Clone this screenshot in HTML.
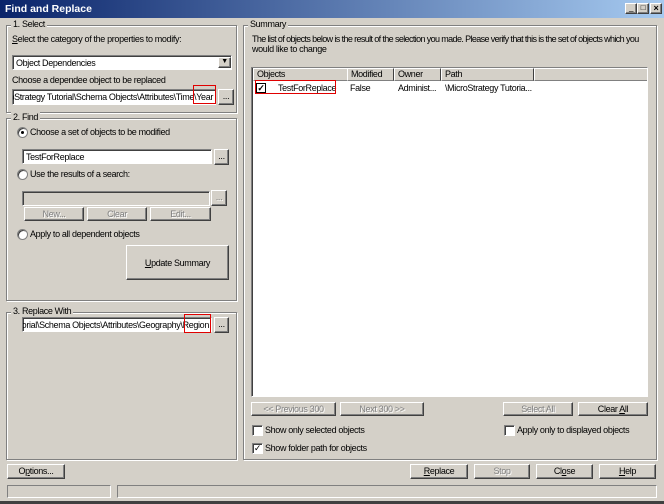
<!DOCTYPE html>
<html><head><meta charset="utf-8"><style>
*{box-sizing:border-box;margin:0;padding:0}
body{width:664px;height:504px;background:#d4d0c8;font-family:"Liberation Sans",sans-serif;font-size:9px;letter-spacing:-0.35px;color:#000;position:relative;overflow:hidden}
.a{position:absolute;white-space:nowrap}
.title{left:0;top:0;width:664px;height:18px;background:linear-gradient(90deg,#0a246a,#a6caf0);color:#fff;font-weight:bold;font-size:10.5px;padding:3px 0 0 5px;letter-spacing:0}
.grp{position:absolute;border:1px solid #808080;box-shadow:1px 1px 0 #fff inset,1px 1px 0 #fff}
.lbl{position:absolute;background:#d4d0c8;padding:0 2px;top:-7px;left:4px}
.inp{position:absolute;background:#fff;border:1px solid;border-color:#808080 #fff #fff #808080;box-shadow:inset 1px 1px 0 #404040;padding:2px 0 0 3px;overflow:hidden;white-space:nowrap}
.r{display:flex;justify-content:flex-end;padding-right:2px}
.dis{background:#d4d0c8}
.btn{position:absolute;background:#d4d0c8;border:1px solid;border-color:#fff #404040 #404040 #fff;box-shadow:inset -1px -1px 0 #808080;text-align:center;padding-top:1px;white-space:nowrap}
.gray{color:#808080;text-shadow:1px 1px 0 #fff}
.radio{position:absolute;width:11px;height:11px;border-radius:50%;background:#fff;border:1px solid #808080;box-shadow:inset 1px 1px 0 #404040}
.chk{position:absolute;width:11px;height:11px;background:#fff;border:1px solid;border-color:#808080 #fff #fff #808080;box-shadow:inset 1px 1px 0 #404040;font-size:9px;line-height:9px;text-align:center}
.red{position:absolute;border:1px solid #e00000}
.hd{position:absolute;top:0;height:13px;border:1px solid;border-color:#fff #404040 #808080 #fff;padding-left:3px;background:#d4d0c8}
</style></head><body>
<div class="a title">Find and Replace</div>
<div class="btn" style="left:625px;top:3px;width:12px;height:11px;font-size:8px;line-height:7px;padding:0">_</div>
<div class="btn" style="left:637px;top:3px;width:12px;height:11px;font-size:8px;line-height:8px;padding:0">□</div>
<div class="btn" style="left:650px;top:3px;width:12px;height:11px;font-size:9px;line-height:8px;padding:0;font-weight:bold">×</div>

<div class="grp" style="left:6px;top:25px;width:231px;height:88px"><span class="lbl">1. Select</span></div>
<div class="a" style="left:12px;top:34px"><u>S</u>elect the category of the properties to modify:</div>
<div class="inp" style="left:12px;top:55px;width:220px;height:15px">Object Dependencies</div>
<div class="btn" style="left:218px;top:57px;width:13px;height:11px;font-size:7px;line-height:8px;padding:0">▼</div>
<div class="a" style="left:12px;top:75px">Choose a dependee object to be replaced</div>
<div class="inp r" style="left:12px;top:89px;width:204px;height:16px"><span>icroStrategy Tutorial\Schema Objects\Attributes\Time\Year</span></div>
<div class="btn" style="left:218px;top:89px;width:16px;height:16px">...</div>
<div class="red" style="left:193px;top:85px;width:23px;height:19px"></div>

<div class="grp" style="left:6px;top:118px;width:231px;height:183px"><span class="lbl">2. Find</span></div>
<div class="radio" style="left:17px;top:127px"><div style="position:absolute;left:3px;top:3px;width:3px;height:3px;background:#000;border-radius:50%"></div></div>
<div class="a" style="left:30px;top:127px">Choose a set of objects to be modified</div>
<div class="inp" style="left:22px;top:149px;width:190px;height:15px">TestForReplace</div>
<div class="btn" style="left:214px;top:149px;width:15px;height:16px">...</div>
<div class="radio" style="left:17px;top:169px"></div>
<div class="a" style="left:30px;top:169px">Use the results of a search:</div>
<div class="inp dis" style="left:22px;top:191px;width:188px;height:15px"></div>
<div class="btn gray" style="left:211px;top:190px;width:16px;height:16px">...</div>
<div class="btn gray" style="left:24px;top:207px;width:60px;height:14px">New...</div>
<div class="btn gray" style="left:87px;top:207px;width:60px;height:14px">Clear</div>
<div class="btn gray" style="left:150px;top:207px;width:61px;height:14px">Edit...</div>
<div class="radio" style="left:17px;top:229px"></div>
<div class="a" style="left:30px;top:229px">Apply to all dependent objects</div>
<div class="btn" style="left:126px;top:245px;width:103px;height:35px;padding-top:12px"><u>U</u>pdate Summary</div>

<div class="grp" style="left:6px;top:312px;width:231px;height:148px"><span class="lbl">3. Replace With</span></div>
<div class="inp r" style="left:22px;top:317px;width:190px;height:15px"><span>Tutorial\Schema Objects\Attributes\Geography\Region</span></div>
<div class="btn" style="left:214px;top:317px;width:15px;height:16px">...</div>
<div class="red" style="left:184px;top:314px;width:27px;height:19px"></div>

<div class="grp" style="left:243px;top:25px;width:414px;height:435px"><span class="lbl">Summary</span></div>
<div class="a" style="left:252px;top:34px;letter-spacing:-0.62px">The list of objects below is the result of the selection you made. Please verify that this is the set of objects which you</div>
<div class="a" style="left:252px;top:44px">would like to change</div>
<div class="inp" style="left:251px;top:67px;width:397px;height:330px;padding:0">
 <div class="hd" style="left:1px;width:95px">Objects</div>
 <div class="hd" style="left:95px;width:47px">Modified</div>
 <div class="hd" style="left:142px;width:47px">Owner</div>
 <div class="hd" style="left:189px;width:93px">Path</div>
 <div class="hd" style="left:282px;width:114px"></div>
 <div class="a" style="left:4px;top:15px;width:10px;height:10px;border:1px solid #000;font-size:9px;line-height:8px;text-align:center;font-weight:bold">✓</div>
 <div class="a" style="left:26px;top:15px">TestForReplace</div>
 <div class="a" style="left:98px;top:15px">False</div>
 <div class="a" style="left:146px;top:15px">Administ...</div>
 <div class="a" style="left:193px;top:15px">\MicroStrategy Tutoria...</div>
</div>
<div class="red" style="left:255px;top:80px;width:81px;height:14px"></div>
<div class="btn gray" style="left:251px;top:402px;width:85px;height:14px">&lt;&lt; Previous 300</div>
<div class="btn gray" style="left:340px;top:402px;width:84px;height:14px">Next 300 &gt;&gt;</div>
<div class="btn gray" style="left:503px;top:402px;width:70px;height:14px">Select All</div>
<div class="btn" style="left:578px;top:402px;width:70px;height:14px">Clear <u>A</u>ll</div>
<div class="chk" style="left:252px;top:425px"></div>
<div class="a" style="left:265px;top:425px">Show only selected objects</div>
<div class="chk" style="left:504px;top:425px"></div>
<div class="a" style="left:517px;top:425px">Apply only to displayed objects</div>
<div class="chk" style="left:252px;top:443px">✓</div>
<div class="a" style="left:265px;top:443px">Show folder path for objects</div>

<div class="btn" style="left:7px;top:464px;width:58px;height:15px">O<u>p</u>tions...</div>
<div class="btn" style="left:410px;top:464px;width:58px;height:15px"><u>R</u>eplace</div>
<div class="btn gray" style="left:474px;top:464px;width:56px;height:15px">Stop</div>
<div class="btn" style="left:536px;top:464px;width:57px;height:15px">Cl<u>o</u>se</div>
<div class="btn" style="left:599px;top:464px;width:57px;height:15px"><u>H</u>elp</div>
<div class="a" style="left:7px;top:485px;width:104px;height:13px;border:1px solid;border-color:#808080 #fff #fff #808080"></div>
<div class="a" style="left:117px;top:485px;width:540px;height:13px;border:1px solid;border-color:#808080 #fff #fff #808080"></div>
<div class="a" style="left:0;top:501px;width:664px;height:3px;background:#404040"></div>
</body></html>
